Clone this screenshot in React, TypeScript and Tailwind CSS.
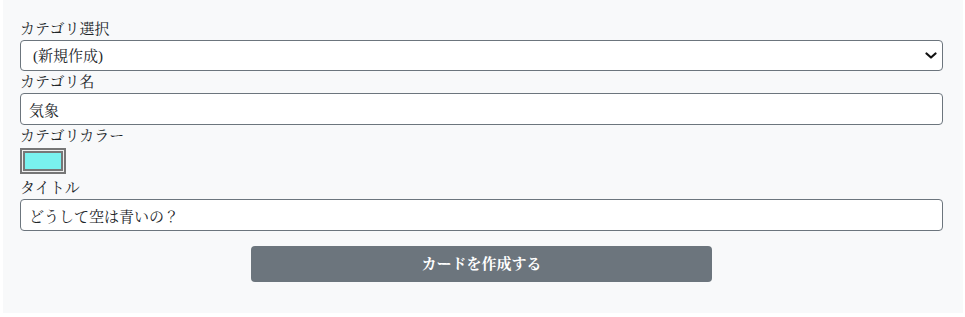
import { useState } from 'react';

const font = { fontFamily: '"Liberation Serif", "Noto Serif CJK JP", "Noto Sans CJK JP", serif' };

export default function App(): JSX.Element {
  const [category, setCategory] = useState('new');
  const [name, setName] = useState('気象');
  const [color, setColor] = useState('#79f2ef');
  const [title, setTitle] = useState('どうして空は青いの？');

  return (
    <div className="mx-auto h-[313px] w-[960px] bg-[#f8f9fa] pl-[17.5px] pr-[19.5px] pt-[18px] text-[15px] leading-[22px] text-[#212529]" style={font}>
      <label className="block">カテゴリ選択</label>
      <div className="relative">
        <select
          value={category}
          onChange={(e) => setCategory(e.target.value)}
          className="block h-[31px] w-full appearance-none rounded-[4px] border border-[#6c757d] bg-white pl-[12px] pr-8 text-[15px] text-[#212529] outline-none"
          style={font}
        >
          <option value="new">(新規作成)</option>
        </select>
        <svg
          className="pointer-events-none absolute right-[6px] top-[11px]"
          width="12"
          height="9"
          viewBox="0 0 12 9"
        >
          <path d="M1.5 2.5 6 6.5 10.5 2.5" fill="none" stroke="#111" strokeWidth="2.2" strokeLinecap="round" strokeLinejoin="round" />
        </svg>
      </div>

      <label className="block">カテゴリ名</label>
      <input
        value={name}
        onChange={(e) => setName(e.target.value)}
        className="block h-[32px] w-full rounded-[4px] border border-[#6c757d] bg-white px-[8px] text-[15px] outline-none"
        style={font}
      />

      <label className="block">カテゴリカラー</label>
      <input
        type="color"
        value={color}
        onChange={(e) => setColor(e.target.value)}
        className="mt-[1px] block h-[26px] w-[46px] cursor-pointer border-2 border-[#767676] bg-[#efefef] p-[1px] [&::-webkit-color-swatch-wrapper]:p-0 [&::-webkit-color-swatch]:border-2 [&::-webkit-color-swatch]:border-[#777]"
      />

      <label className="mt-[3px] block">タイトル</label>
      <input
        value={title}
        onChange={(e) => setTitle(e.target.value)}
        className="block h-[32px] w-full rounded-[4px] border border-[#6c757d] bg-white px-[8px] text-[15px] outline-none"
        style={font}
      />

      <button
        type="button"
        className="mx-auto mt-[15px] block h-[36px] w-1/2 rounded-[4px] bg-[#6c757d] text-[15px] font-bold text-white"
        style={font}
      >
        カードを作成する
      </button>
    </div>
  );
}
